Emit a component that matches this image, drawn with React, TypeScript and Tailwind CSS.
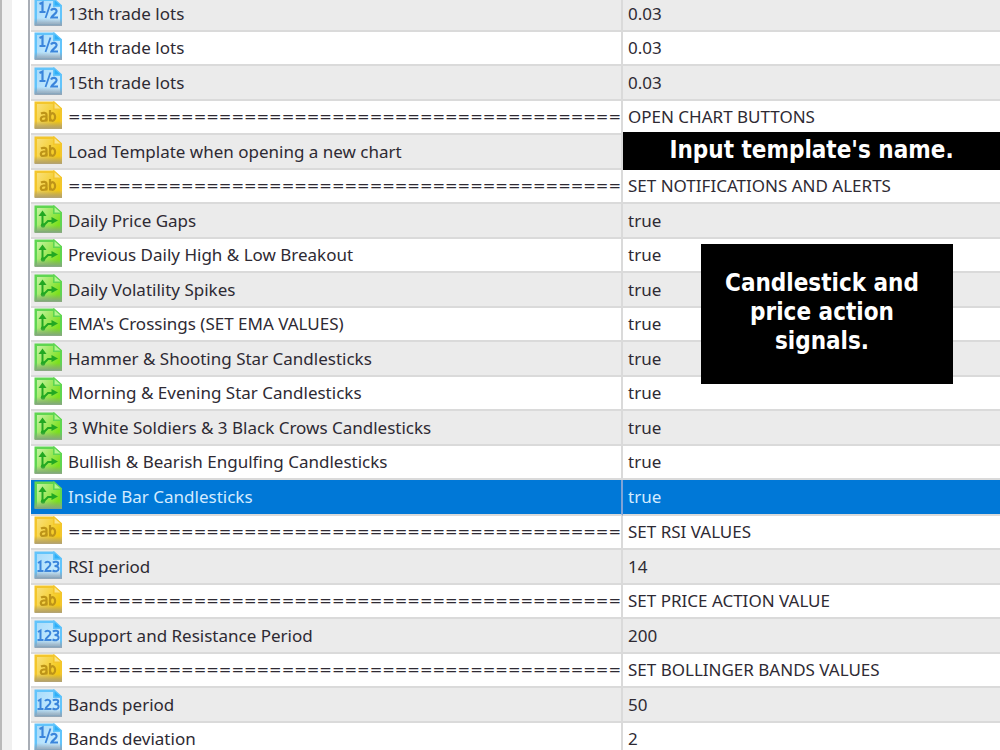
import type { ReactNode } from "react";

type InputKind = "double" | "int" | "string" | "bool";

type InputRow = {
  kind: InputKind;
  name: string;
  value: string;
  selected?: boolean;
};

const SEPARATOR = "=".repeat(44);

const rows: InputRow[] = [
  { kind: "double", name: "13th trade lots", value: "0.03" },
  { kind: "double", name: "14th trade lots", value: "0.03" },
  { kind: "double", name: "15th trade lots", value: "0.03" },
  { kind: "string", name: SEPARATOR, value: "OPEN CHART BUTTONS" },
  { kind: "string", name: "Load Template when opening a new chart", value: "" },
  { kind: "string", name: SEPARATOR, value: "SET NOTIFICATIONS AND ALERTS" },
  { kind: "bool", name: "Daily Price Gaps", value: "true" },
  { kind: "bool", name: "Previous Daily High & Low Breakout", value: "true" },
  { kind: "bool", name: "Daily Volatility Spikes", value: "true" },
  { kind: "bool", name: "EMA's Crossings (SET EMA VALUES)", value: "true" },
  { kind: "bool", name: "Hammer & Shooting Star Candlesticks", value: "true" },
  { kind: "bool", name: "Morning & Evening Star Candlesticks", value: "true" },
  { kind: "bool", name: "3 White Soldiers & 3 Black Crows Candlesticks", value: "true" },
  { kind: "bool", name: "Bullish & Bearish Engulfing Candlesticks", value: "true" },
  { kind: "bool", name: "Inside Bar Candlesticks", value: "true", selected: true },
  { kind: "string", name: SEPARATOR, value: "SET RSI VALUES" },
  { kind: "int", name: "RSI period", value: "14" },
  { kind: "string", name: SEPARATOR, value: "SET PRICE ACTION VALUE" },
  { kind: "int", name: "Support and Resistance Period", value: "200" },
  { kind: "string", name: SEPARATOR, value: "SET BOLLINGER BANDS VALUES" },
  { kind: "int", name: "Bands period", value: "50" },
  { kind: "double", name: "Bands deviation", value: "2" },
];

const palette = {
  blue: { edge: "#62c4fb", from: "#a9dcfb", to: "#c9ecff", fold: "#2fb0f8", foot: "#8fa3b5" },
  yellow: { edge: "#f3c62c", from: "#f9e07a", to: "#f3c70f", fold: "#fbe488", foot: "#b1a06c" },
  green: { edge: "#5fd651", from: "#c5f3a4", to: "#7be01c", fold: "#b6f590", foot: "#86a87c" },
};

function FileIcon({ tone, children }: { tone: keyof typeof palette; children: ReactNode }) {
  const c = palette[tone];
  return (
    <svg viewBox="0 0 28 28" className="mb-1 size-7 shrink-0" aria-hidden="true">
      <defs>
        <linearGradient id={`${tone}-face`} x1="0" y1="0" x2="1" y2="0.6">
          <stop offset="0" stopColor={c.from} />
          <stop offset="1" stopColor={c.to} />
        </linearGradient>
        <linearGradient id={`${tone}-foot`} x1="0" y1="0" x2="0" y2="1">
          <stop offset="0" stopColor={c.foot} stopOpacity="0" />
          <stop offset="0.6" stopColor={c.foot} stopOpacity="0.7" />
          <stop offset="1" stopColor={c.foot} />
        </linearGradient>
      </defs>
      <path d="M0.500 0.500H20L28 8V27H0.500Z" fill={c.edge} />
      <path d="M3 3H19V9H26V26H3Z" fill={`url(#${tone}-face)`} />
      <path d="M20 1L28 8H20Z" fill={c.fold} stroke={c.edge} strokeWidth="1.2" />
      {children}
      <path d="M0.500 20H28V28H0.500Z" fill={`url(#${tone}-foot)`} />
    </svg>
  );
}

function KindIcon({ kind }: { kind: InputKind }) {
  if (kind === "double") {
    return (
      <FileIcon tone="blue">
        <g fill="none" stroke="#3a85dc" strokeWidth="2.2">
          <path d="M5.5 6L8.5 4.500V14M5.5 14H11.500" />
          <path d="M16.500 5.500L11.500 20" strokeWidth="1.8" />
          <path d="M17 12.500C18.500 10 23 10.500 22.500 13.500C22 16 18.500 17 17.500 19.500H24" />
        </g>
      </FileIcon>
    );
  }
  if (kind === "int") {
    return (
      <FileIcon tone="blue">
        <g fill="none" stroke="#3a85dc" strokeWidth="2">
          <path d="M4 12L6.500 10.500V20M3.500 20H9.500" />
          <path d="M11 12C12.500 10 16.500 10.500 16.300 13.500C16 16 12.500 17 11.500 20H17.500" />
          <path d="M18.800 11.500C21 10 24.500 10.800 24.200 12.800C24 14.800 22.500 15 20.500 15C22.500 15 24.800 15.800 24.600 17.800C24.300 20.800 21 20.800 18.500 19.500" />
        </g>
      </FileIcon>
    );
  }
  if (kind === "string") {
    return (
      <FileIcon tone="yellow">
        <g fill="none" stroke="#bd9418" strokeWidth="2.200">
          <path d="M7 12.500C9 11.500 12.500 11.500 12.500 14V20.500" />
          <path d="M12.500 15.500H9.500C6 16 6 20 9 20C11 20 12.500 19 12.500 17.500" />
          <path d="M16 9V20.500" />
          <ellipse cx="18.500" cy="16" rx="2.600" ry="3.800" />
        </g>
      </FileIcon>
    );
  }
  return (
    <FileIcon tone="green">
      <path d="M8.500 21V9M9 21L14 16H20" fill="none" stroke="#22a822" strokeWidth="2" />
      <path d="M8.500 5.500L12.500 11H4.500Z" fill="#22a822" />
      <path d="M24 15.500L17.500 12V19Z" fill="#22a822" />
      <circle cx="9" cy="20.500" r="2.200" fill="#22a822" />
    </FileIcon>
  );
}

const noteText = "font-['DejaVu_Sans_Condensed','DejaVu_Sans',sans-serif] text-2xl font-bold leading-[29px] text-white";

function Note({ name }: { name: string }) {
  if (name.startsWith("Load Template")) {
    return (
      <div className="absolute -top-[3px] right-0 left-0 z-10 h-[38px] bg-black pt-1 text-center">
        <p className={noteText}>Input template's name.</p>
      </div>
    );
  }
  if (name.startsWith("Previous Daily")) {
    return (
      <div className="absolute top-[5px] left-[78px] z-10 h-[140px] w-[252px] bg-black pt-[25px] pr-2.5 text-center">
        <p className={noteText}>
          Candlestick and
          <br />
          price action
          <br />
          signals.
        </p>
      </div>
    );
  }
  return null;
}

export default function App() {
  return (
    <div className="flex h-screen overflow-hidden border-l-2 border-[#b9b9b9] bg-white font-['Noto_Sans',sans-serif] text-[17px] leading-5 text-[#2e2a33]">
      {/* Dialog frame */}
      <div className="w-2.5 shrink-0 bg-[#f0f0f0]" />

      <div className="ml-4 min-w-0 flex-1 border-l-2 border-[#a9aeb6] pl-px">
        {/* The list is scrolled a few pixels into its first row */}
        <table className="-mt-[3px] w-full table-fixed border-separate border-spacing-0">
          <colgroup>
            <col className="w-[592px]" />
            <col />
          </colgroup>
          <tbody>
            {rows.map((row, i) => (
              <tr
                key={i}
                className={
                  row.selected
                    ? "h-9 bg-[#0078d7] text-[#d3ebff]"
                    : "odd:h-[35px] odd:bg-[#ebebeb] even:h-[34px] even:bg-white"
                }
              >
                <td
                  className={`overflow-hidden border-r-2 border-b-2 border-b-[#dadada] p-0 ${
                    row.selected ? "border-r-[#7fa3d6]" : "border-r-[#dadada]"
                  }`}
                >
                  <div className="flex items-center gap-1.5 pl-[3px] whitespace-nowrap">
                    <KindIcon kind={row.kind} />
                    {row.name === SEPARATOR ? (
                      <span className="font-['DejaVu_Sans',sans-serif] text-[15px]">{row.name}</span>
                    ) : (
                      <span>{row.name}</span>
                    )}
                  </div>
                </td>
                <td className="relative border-b-2 border-[#dadada] p-0 pl-[5px] whitespace-nowrap">
                  {row.value}
                  <Note name={row.name} />
                </td>
              </tr>
            ))}
          </tbody>
        </table>
      </div>
    </div>
  );
}
